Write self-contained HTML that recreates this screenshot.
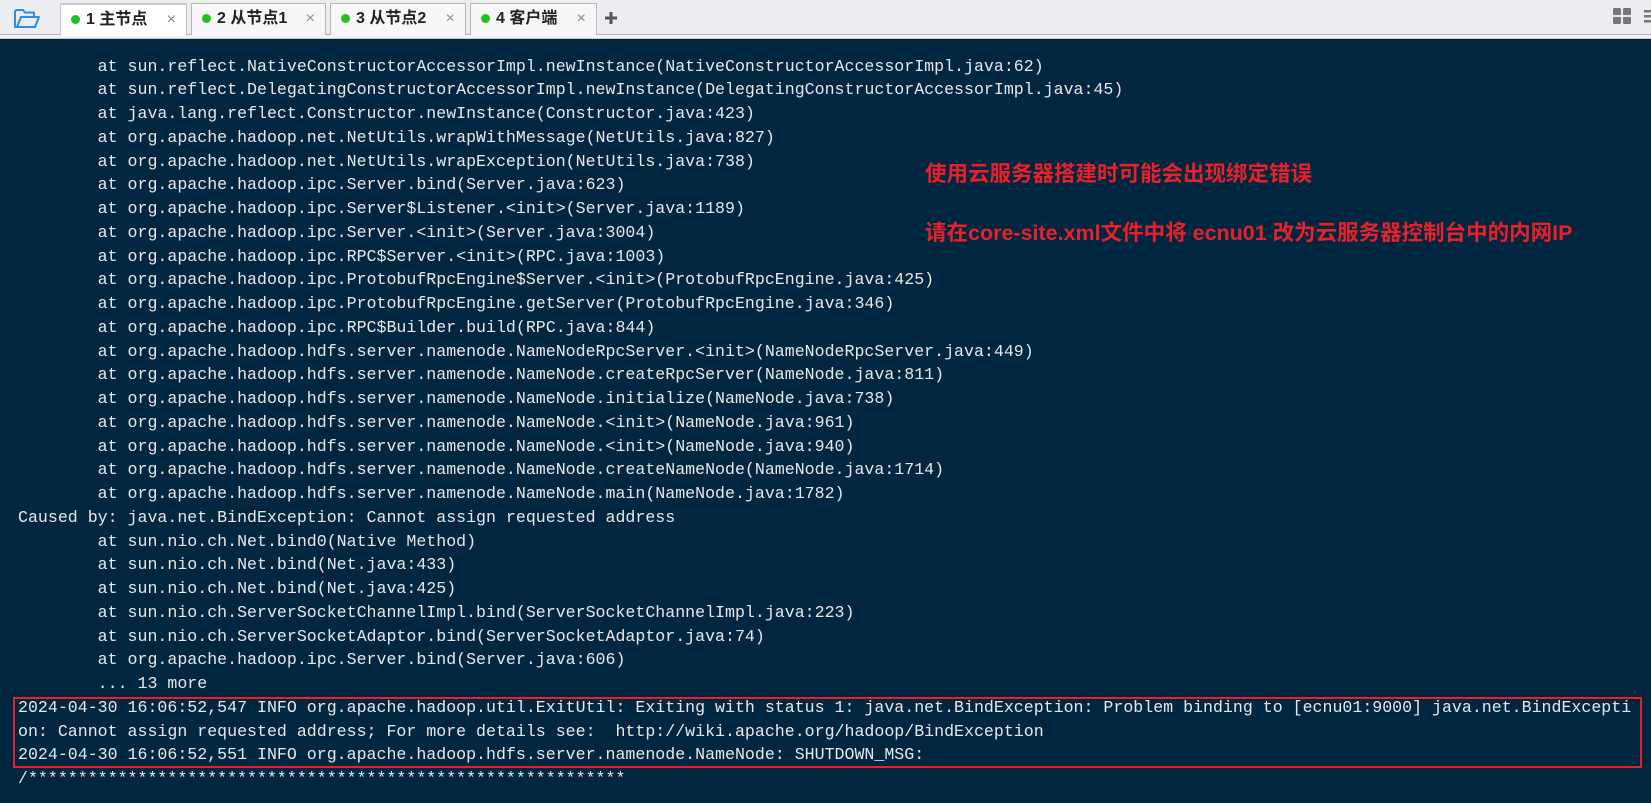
<!DOCTYPE html>
<html><head><meta charset="utf-8"><style>
*{margin:0;padding:0;box-sizing:border-box}
html,body{width:1651px;height:803px;overflow:hidden;background:#01263f}
.bar{position:absolute;left:0;top:0;width:1651px;height:35px;background:#ecedf0;border-bottom:1px solid #b4b4b4}
.bar2{position:absolute;left:0;top:35px;width:1651px;height:4px;background:#f4f5f7;border-bottom:1px solid #c8c8c8}
.tab{position:absolute;top:3px;height:32px;background:#f7f7f8;border:1px solid #b8b8b8;border-bottom:none;font-family:"Liberation Sans","Noto Sans CJK SC",sans-serif;font-weight:bold;font-size:16px;color:#222;line-height:30px;white-space:nowrap}
.tab.act{background:#fff;border-top:2px solid #2a8de0;border-color:#c8c8c8;height:33px}
.dot{display:inline-block;width:9px;height:9px;border-radius:50%;background:#1fc21f;margin:0 6px 0 10px;vertical-align:0px}
.x{position:absolute;right:10px;top:0;font-weight:normal;color:#888;font-size:16px}
.term{position:absolute;left:18px;top:54.5px;width:1625px;overflow:hidden;font-family:"Liberation Mono",monospace;font-size:16.6px;color:#e8e8e8}
.term div{height:23.76px;line-height:23.76px;white-space:pre}
.red{position:absolute;font-family:"Liberation Sans","Noto Sans CJK SC",sans-serif;font-weight:bold;font-size:21.5px;color:#e8202a;white-space:nowrap}
.box{position:absolute;left:13px;top:697px;width:1629px;height:71px;border:2.5px solid #e8202a}
</style></head><body>
<div class="bar"></div><div class="bar2"></div>
<svg style="position:absolute;left:13px;top:8px" width="28" height="22" viewBox="0 0 28 22"><path d="M2 4 V19 H22 L26 9 H8 L4 19 M2 4 Q2 2 4 2 H10 L12 4.5 H21 V9" fill="none" stroke="#2a8de0" stroke-width="2" stroke-linejoin="round"/></svg>
<div class="tab act" style="left:60px;width:127px"><span class="dot"></span>1 主节点<span class="x">×</span></div>
<div class="tab" style="left:191px;width:135px"><span class="dot"></span>2 从节点1<span class="x">×</span></div>
<div class="tab" style="left:330px;width:136px"><span class="dot"></span>3 从节点2<span class="x">×</span></div>
<div class="tab" style="left:470px;width:127px"><span class="dot"></span>4 客户端<span class="x">×</span></div>
<svg style="position:absolute;left:604px;top:11px" width="14" height="14"><path d="M7 1V13M1 7H13" stroke="#555" stroke-width="3"/></svg>
<svg style="position:absolute;left:1613px;top:8px" width="38" height="18"><g fill="#777"><rect x="0" y="0" width="8" height="7" rx="1"/><rect x="10" y="0" width="8" height="7" rx="1"/><rect x="0" y="9" width="8" height="7" rx="1"/><rect x="10" y="9" width="8" height="7" rx="1"/><rect x="31" y="2" width="7" height="2.5"/><rect x="31" y="7" width="7" height="2.5"/><rect x="31" y="12" width="7" height="2.5"/></g></svg>
<div class="term"><div>        at sun.reflect.NativeConstructorAccessorImpl.newInstance(NativeConstructorAccessorImpl.java:62)</div><div>        at sun.reflect.DelegatingConstructorAccessorImpl.newInstance(DelegatingConstructorAccessorImpl.java:45)</div><div>        at java.lang.reflect.Constructor.newInstance(Constructor.java:423)</div><div>        at org.apache.hadoop.net.NetUtils.wrapWithMessage(NetUtils.java:827)</div><div>        at org.apache.hadoop.net.NetUtils.wrapException(NetUtils.java:738)</div><div>        at org.apache.hadoop.ipc.Server.bind(Server.java:623)</div><div>        at org.apache.hadoop.ipc.Server$Listener.&lt;init&gt;(Server.java:1189)</div><div>        at org.apache.hadoop.ipc.Server.&lt;init&gt;(Server.java:3004)</div><div>        at org.apache.hadoop.ipc.RPC$Server.&lt;init&gt;(RPC.java:1003)</div><div>        at org.apache.hadoop.ipc.ProtobufRpcEngine$Server.&lt;init&gt;(ProtobufRpcEngine.java:425)</div><div>        at org.apache.hadoop.ipc.ProtobufRpcEngine.getServer(ProtobufRpcEngine.java:346)</div><div>        at org.apache.hadoop.ipc.RPC$Builder.build(RPC.java:844)</div><div>        at org.apache.hadoop.hdfs.server.namenode.NameNodeRpcServer.&lt;init&gt;(NameNodeRpcServer.java:449)</div><div>        at org.apache.hadoop.hdfs.server.namenode.NameNode.createRpcServer(NameNode.java:811)</div><div>        at org.apache.hadoop.hdfs.server.namenode.NameNode.initialize(NameNode.java:738)</div><div>        at org.apache.hadoop.hdfs.server.namenode.NameNode.&lt;init&gt;(NameNode.java:961)</div><div>        at org.apache.hadoop.hdfs.server.namenode.NameNode.&lt;init&gt;(NameNode.java:940)</div><div>        at org.apache.hadoop.hdfs.server.namenode.NameNode.createNameNode(NameNode.java:1714)</div><div>        at org.apache.hadoop.hdfs.server.namenode.NameNode.main(NameNode.java:1782)</div><div>Caused by: java.net.BindException: Cannot assign requested address</div><div>        at sun.nio.ch.Net.bind0(Native Method)</div><div>        at sun.nio.ch.Net.bind(Net.java:433)</div><div>        at sun.nio.ch.Net.bind(Net.java:425)</div><div>        at sun.nio.ch.ServerSocketChannelImpl.bind(ServerSocketChannelImpl.java:223)</div><div>        at sun.nio.ch.ServerSocketAdaptor.bind(ServerSocketAdaptor.java:74)</div><div>        at org.apache.hadoop.ipc.Server.bind(Server.java:606)</div><div>        ... 13 more</div><div>2024-04-30 16:06:52,547 INFO org.apache.hadoop.util.ExitUtil: Exiting with status 1: java.net.BindException: Problem binding to [ecnu01:9000] java.net.BindExcepti</div><div>on: Cannot assign requested address; For more details see:  http://wiki.apache.org/hadoop/BindException</div><div>2024-04-30 16:06:52,551 INFO org.apache.hadoop.hdfs.server.namenode.NameNode: SHUTDOWN_MSG:</div><div>/************************************************************</div></div>
<div class="box"></div>
<div class="red" style="left:925px;top:157px">使用云服务器搭建时可能会出现绑定错误</div>
<div class="red" style="left:925px;top:216px">请在core-site.xml文件中将 ecnu01 改为云服务器控制台中的内网IP</div>
</body></html>
